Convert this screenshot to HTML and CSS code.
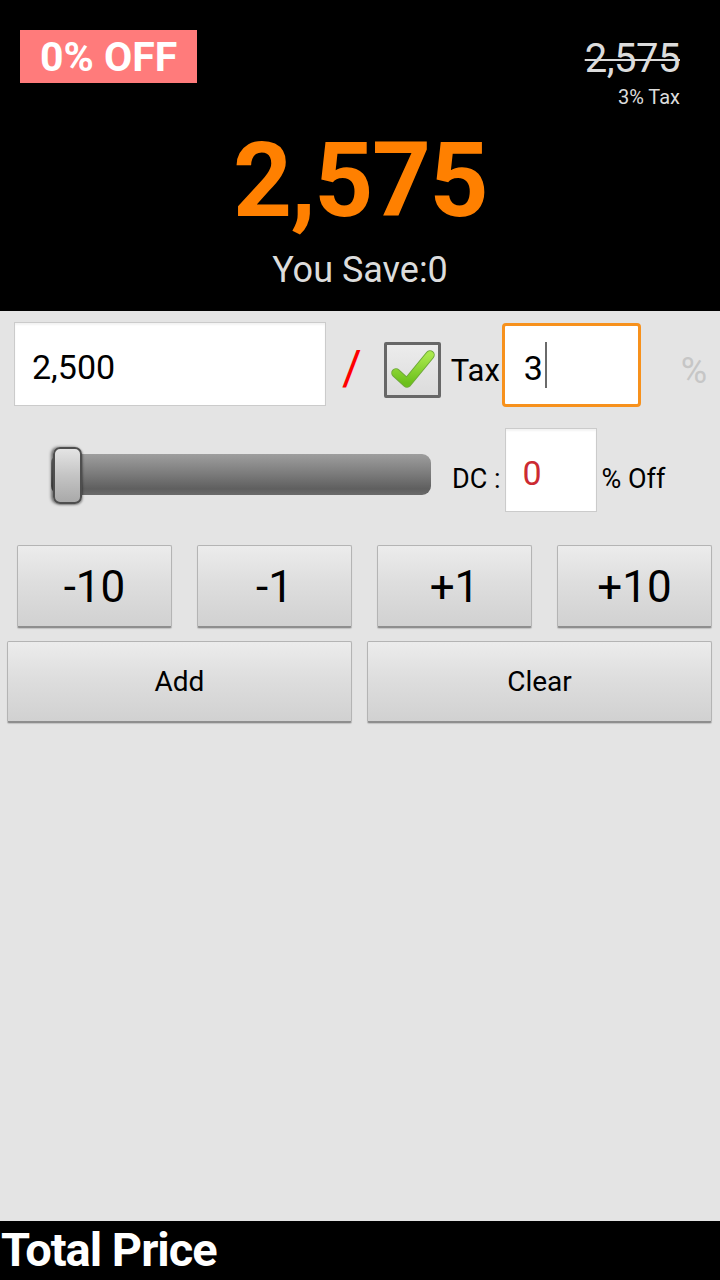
FILE: index.html
```html
<!DOCTYPE html>
<html>
<head>
<meta charset="utf-8">
<link rel="stylesheet" href="styles.css">
</head>
<body>
<div class="app">
  <header class="summary">
    <div class="summary-top">
      <div class="badge">0% OFF</div>
      <div class="orig">
        <div class="orig-price">2,575</div>
        <div class="orig-tax">3% Tax</div>
      </div>
    </div>
    <div class="final-price">2,575</div>
    <div class="save">You Save:0</div>
  </header>

  <main class="content">
    <div class="row-inputs">
      <div class="field field-price">2,500</div>
      <div class="slash">/</div>
      <div class="checkbox">
        <svg width="51" height="50" viewBox="0 0 51 50">
          <defs>
            <linearGradient id="g" x1="0" y1="0" x2="0" y2="1">
              <stop offset="0" stop-color="#a9e84c"/>
              <stop offset="1" stop-color="#6cc01c"/>
            </linearGradient>
          </defs>
          <polyline points="9,28 20,38 43,10" fill="none" stroke="#6fa83a" stroke-width="9.5" stroke-linecap="round" stroke-linejoin="round"/>
          <polyline points="9,28 20,38 43,10" fill="none" stroke="url(#g)" stroke-width="7.5" stroke-linecap="round" stroke-linejoin="round"/>
        </svg>
      </div>
      <div class="tax-label">Tax</div>
      <div class="field field-tax">3<span class="cursor"></span></div>
      <div class="pct">%</div>
    </div>

    <div class="row-dc">
      <div class="slider">
        <div class="track"></div>
        <div class="thumb"></div>
      </div>
      <div class="dc-label">DC :</div>
      <div class="field field-dc">0</div>
      <div class="off-label">% Off</div>
    </div>

    <div class="row-steps">
      <button class="btn btn-step">-10</button>
      <button class="btn btn-step">-1</button>
      <button class="btn btn-step">+1</button>
      <button class="btn btn-step">+10</button>
    </div>

    <div class="row-actions">
      <button class="btn btn-action">Add</button>
      <button class="btn btn-action">Clear</button>
    </div>
  </main>

  <footer class="total">Total Price</footer>
</div>
</body>
</html>
```

FILE: styles.css
```css
* { box-sizing: border-box; }
html, body { margin: 0; padding: 0; }
body {
  width: 720px;
  height: 1280px;
  font-family: Roboto, "Noto Sans", sans-serif;
  background: #e4e4e4;
  overflow: hidden;
}
.app {
  height: 1280px;
  display: flex;
  flex-direction: column;
}

/* header */
.summary {
  height: 311px;
  background: #000;
  padding: 30px 40px 0 20px;
  display: flex;
  flex-direction: column;
}
.summary-top {
  display: flex;
  justify-content: space-between;
  align-items: flex-start;
  height: 78px;
}
.badge {
  background: #ff7b7b;
  color: #fff;
  font-weight: 700;
  font-size: 41px;
  height: 53px;
  line-height: 51px;
  padding: 2px 20px 0 20px;
  width: 177px;
  white-space: nowrap;
}
.orig {
  display: flex;
  flex-direction: column;
  align-items: flex-end;
}
.orig-price {
  font-size: 40px;
  line-height: 58px;
  color: #dcdcdc;
  text-decoration: line-through;
  text-decoration-thickness: 2px;
  letter-spacing: -0.5px;
}
.orig-tax {
  font-size: 20px;
  line-height: 18px;
  color: #dcdcdc;
}
.final-price {
  margin-top: 18px;
  text-align: center;
  font-size: 103px;
  line-height: 110px;
  font-weight: 700;
  color: #ff8000;
  letter-spacing: -1.5px;
  padding-left: 20px;
}
.save {
  margin-top: 14px;
  text-align: center;
  font-size: 36px;
  line-height: 40px;
  color: #dcdcdc;
  padding-left: 20px;
}

/* content */
.content {
  flex: 1;
  padding-top: 11px;
}
.field {
  background: #fff;
  border: 1px solid #cbcbcb;
  height: 84px;
  font-size: 34px;
  line-height: 40px;
  padding-top: 24px;
  color: #000;
  box-shadow: inset 0 2px 2px rgba(0,0,0,0.05);
}
.row-inputs {
  display: flex;
  align-items: flex-start;
  padding-left: 14px;
  height: 85px;
}
.field-price {
  width: 312px;
  padding-left: 17px;
}
.slash {
  margin-left: 16px;
  margin-top: 22px;
  color: #f00;
  font-size: 48px;
  line-height: 48px;
}
.checkbox {
  margin-left: 22px;
  margin-top: 20px;
  width: 57px;
  height: 56px;
  border: 3px solid #676767;
  border-radius: 2px;
  background: linear-gradient(#ececec, #dcdcdc);
  display: flex;
  align-items: center;
  justify-content: center;
}
.checkbox svg { display: block; }
.tax-label {
  margin-left: 10px;
  margin-top: 29px;
  font-size: 31px;
  line-height: 40px;
}
.field-tax {
  margin-top: 1px;
  margin-left: 2px;
  width: 139px;
  border: 3px solid #f7911c;
  border-radius: 4px;
  padding-top: 22px;
  padding-left: 19px;
  display: flex;
  align-items: flex-start;
  box-shadow: none;
}
.cursor {
  display: inline-block;
  width: 2px;
  height: 46px;
  margin-top: -6px;
  margin-left: 2px;
  background: #6a6a6a;
}
.pct {
  margin-left: 40px;
  margin-top: 29px;
  font-size: 36px;
  line-height: 40px;
  color: #c6c6c6;
}

.row-dc {
  margin-top: 21px;
  display: flex;
  align-items: flex-start;
  height: 84px;
}
.slider {
  position: relative;
  margin-left: 51px;
  width: 380px;
  height: 84px;
}
.track {
  position: absolute;
  left: 0;
  top: 26px;
  width: 380px;
  height: 41px;
  border-radius: 9px;
  background: linear-gradient(#9e9e9e, #7a7a7a 50%, #5f5f5f 85%, #6b6b6b);
}
.thumb {
  position: absolute;
  left: 2px;
  top: 19px;
  width: 29px;
  height: 57px;
  border: 2px solid #4e4e4e;
  border-radius: 7px;
  background: linear-gradient(#e4e4e4, #c4c4c4 50%, #a9a9a9);
  box-shadow: -2px 0 3px rgba(0,0,0,0.5), 1px 1px 2px rgba(0,0,0,0.3);
}
.dc-label {
  margin-left: 21px;
  margin-top: 31px;
  font-size: 27px;
  line-height: 40px;
  white-space: nowrap;
}
.field-dc {
  margin-left: 4px;
  width: 92px;
  padding-left: 17px;
  color: #cc2a32;
}
.off-label {
  margin-left: 5px;
  margin-top: 31px;
  font-size: 27px;
  line-height: 40px;
  white-space: nowrap;
}

.btn {
  font-family: Roboto, "Noto Sans", sans-serif;
  color: #000;
  background: linear-gradient(#ececec, #dedede 45%, #d1d1d1);
  border: 1px solid #b4b4b4;
  border-bottom: 2px solid #8e8e8e;
  border-radius: 2px;
  box-shadow: 0 1px 1px rgba(0,0,0,0.15);
  padding: 0;
  margin: 0;
  text-align: center;
}
.row-steps {
  margin-top: 33px;
  padding-left: 17px;
  display: flex;
  gap: 25px;
}
.btn-step {
  width: 155px;
  height: 83px;
  font-size: 44px;
  line-height: 82px;
}
.row-actions {
  margin-top: 13px;
  padding-left: 7px;
  display: flex;
  gap: 15px;
}
.btn-action {
  width: 345px;
  height: 82px;
  font-size: 28px;
  line-height: 80px;
}

.total {
  height: 59px;
  background: #000;
  color: #fff;
  font-weight: 700;
  font-size: 47px;
  line-height: 58px;
  letter-spacing: -1px;
  padding-left: 1px;
  white-space: nowrap;
}
```
